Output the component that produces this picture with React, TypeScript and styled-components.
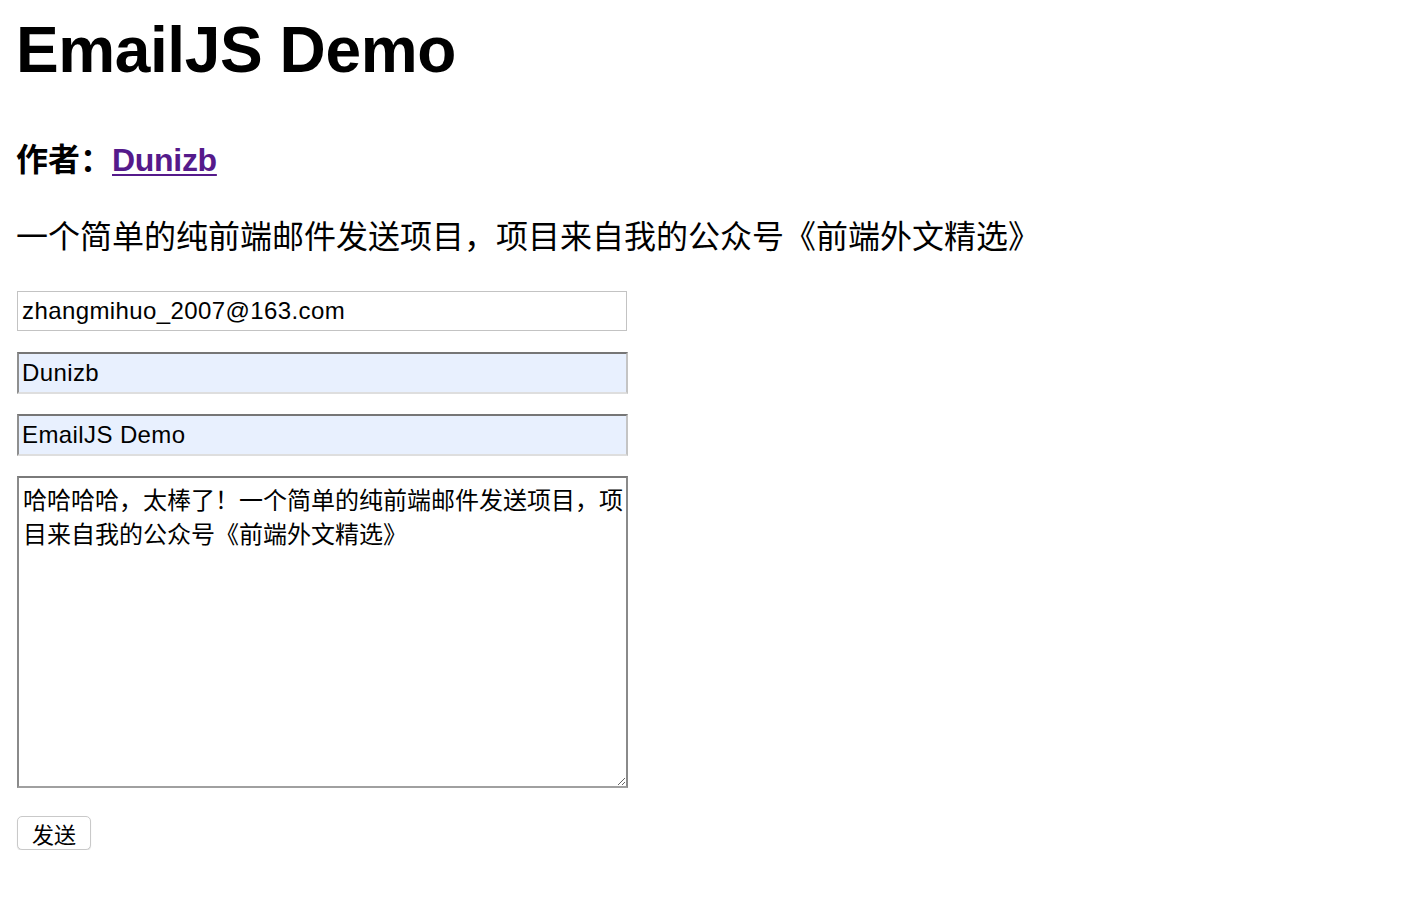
import React from "react";
import styled, { createGlobalStyle } from "styled-components";

const Global = createGlobalStyle`
  html, body { margin: 0; padding: 0; background: #fff; }
  body { font-family: "Liberation Sans", "Noto Sans CJK SC", sans-serif; color: #000; }
`;

const Page = styled.div`
  display: flex;
  flex-direction: column;
  align-items: flex-start;
  padding: 14px 16px 0 16px;
`;

const Title = styled.h1`
  margin: 0;
  font-size: 64px;
  line-height: 72px;
  font-weight: 700;
  letter-spacing: -0.4px;
`;

const Author = styled.h3`
  margin: 54px 0 0 0;
  font-size: 32px;
  line-height: 40px;
  font-weight: 700;
  font-family: "Liberation Sans", "Noto Sans CJK SC", sans-serif;
`;

const AuthorLink = styled.a`
  color: #551a8b;
  text-decoration: underline;
  text-underline-offset: 3px;
  text-decoration-thickness: 2px;
  letter-spacing: -0.3px;
`;

const Desc = styled.p`
  margin: 34px 0 0 0;
  font-size: 32px;
  line-height: 40px;
  font-weight: 400;
  font-family: "Noto Sans CJK SC", sans-serif;
`;

const Form = styled.form`
  display: flex;
  flex-direction: column;
  align-items: flex-start;
  margin: 37px 0 0 1px;
`;

const Field = styled.input<{ $filled?: boolean; $gap: number }>`
  box-sizing: border-box;
  margin: ${(p) => p.$gap}px 0 0 0;
  font-family: "Liberation Sans", "Noto Sans CJK SC", sans-serif;
  font-size: 24px;
  letter-spacing: 0.4px;
  color: #000;
  outline: none;
  ${(p) =>
    p.$filled
      ? `
    width: 611px;
    height: 42px;
    padding: 0 3px;
    background: #e8f0fe;
    border-style: solid;
    border-width: 2px;
    border-top-color: #767676;
    border-left-color: #8f8f8f;
    border-right-color: #c4c4c4;
    border-bottom-color: #dedede;
  `
      : `
    width: 610px;
    height: 40px;
    padding: 0 4px;
    background: #fff;
    border: 1px solid #c3c3c3;
  `}
`;

const Message = styled.textarea`
  box-sizing: border-box;
  margin: 20px 0 0 0;
  width: 611px;
  height: 312px;
  padding: 4px 2px 4px 4px;
  border: 2px solid #8a8a8a;
  border-top-color: #7a7a7a;
  border-bottom-color: #a0a0a0;
  font-family: "Noto Sans CJK SC", sans-serif;
  font-size: 24px;
  line-height: 34px;
  color: #000;
  background: #fff;
  resize: both;
  outline: none;
  overflow: hidden;
`;

const SendButton = styled.button`
  margin: 28px 0 0 0;
  height: 34px;
  padding: 0 14px;
  background: #fff;
  border: 1px solid #c9c9c9;
  border-radius: 5px;
  box-shadow: 0 1px 1px rgba(0, 0, 0, 0.12);
  font-family: "Noto Sans CJK SC", sans-serif;
  font-size: 22px;
  line-height: 32px;
  color: #000;
`;

export default function App() {
  return (
    <>
      <Global />
      <Page>
        <Title>EmailJS Demo</Title>
        <Author>
          作者：<AuthorLink href="#">Dunizb</AuthorLink>
        </Author>
        <Desc>一个简单的纯前端邮件发送项目，项目来自我的公众号《前端外文精选》</Desc>
        <Form onSubmit={(e) => e.preventDefault()}>
          <Field $gap={0} defaultValue="zhangmihuo_2007@163.com" />
          <Field $gap={21} $filled defaultValue="Dunizb" />
          <Field $gap={20} $filled defaultValue="EmailJS Demo" />
          <Message defaultValue="哈哈哈哈，太棒了！一个简单的纯前端邮件发送项目，项目来自我的公众号《前端外文精选》" />
          <SendButton type="submit">发送</SendButton>
        </Form>
      </Page>
    </>
  );
}
